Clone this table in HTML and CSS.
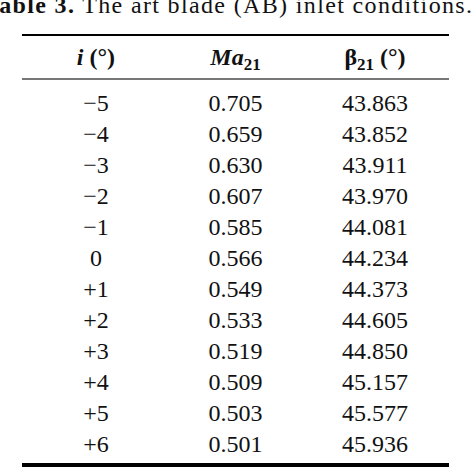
FILE: index.html
```html
<!DOCTYPE html>
<html lang="en">
<head>
<meta charset="utf-8">
<title>Table 3</title>
<link rel="stylesheet" href="styles.css">
</head>
<body>
<div class="page">
  <p class="caption"><b>Table 3.</b> The art blade (AB) inlet conditions.</p>
  <div class="table">
    <div class="head">
      <div class="cell"><b><i>i</i> (°)</b></div>
      <div class="cell"><b><i>Ma</i><sub>21</sub></b></div>
      <div class="cell"><b>β<sub>21</sub> (°)</b></div>
    </div>
    <div class="body">
      <div class="cell">−5</div><div class="cell">0.705</div><div class="cell">43.863</div>
      <div class="cell">−4</div><div class="cell">0.659</div><div class="cell">43.852</div>
      <div class="cell">−3</div><div class="cell">0.630</div><div class="cell">43.911</div>
      <div class="cell">−2</div><div class="cell">0.607</div><div class="cell">43.970</div>
      <div class="cell">−1</div><div class="cell">0.585</div><div class="cell">44.081</div>
      <div class="cell">0</div><div class="cell">0.566</div><div class="cell">44.234</div>
      <div class="cell">+1</div><div class="cell">0.549</div><div class="cell">44.373</div>
      <div class="cell">+2</div><div class="cell">0.533</div><div class="cell">44.605</div>
      <div class="cell">+3</div><div class="cell">0.519</div><div class="cell">44.850</div>
      <div class="cell">+4</div><div class="cell">0.509</div><div class="cell">45.157</div>
      <div class="cell">+5</div><div class="cell">0.503</div><div class="cell">45.577</div>
      <div class="cell">+6</div><div class="cell">0.501</div><div class="cell">45.936</div>
    </div>
  </div>
</div>
</body>
</html>
```

FILE: styles.css
```css
html, body {
  margin: 0;
  padding: 0;
  background: #fff;
}
body {
  width: 474px;
  height: 468px;
  overflow: hidden;
  font-family: "Liberation Serif", "Times New Roman", serif;
  font-size: 24px;
  color: #111;
}
.page {
  width: 474px;
  padding-top: 1px;
}
.caption {
  margin: -8px 0 0 -16px;
  line-height: 24px;
  height: 24px;
  white-space: nowrap;
  letter-spacing: 1.35px;
}
.caption b {
  font-weight: bold;
}
.table {
  margin: 17px 0 0 22px;
  width: 427px;
  border-top: 2px solid #000;
  border-bottom: 4px solid #000;
}
.head,
.body {
  display: grid;
  grid-template-columns: 148px 131px 148px;
}
.head {
  height: 42px;
  line-height: 42px;
  border-bottom: 2px solid #777;
}
.body {
  padding: 8px 0 3px;
  line-height: 31px;
}
.cell {
  text-align: center;
  white-space: nowrap;
}
sub {
  font-size: 17px;
  line-height: 0;
  vertical-align: -5px;
}
```
